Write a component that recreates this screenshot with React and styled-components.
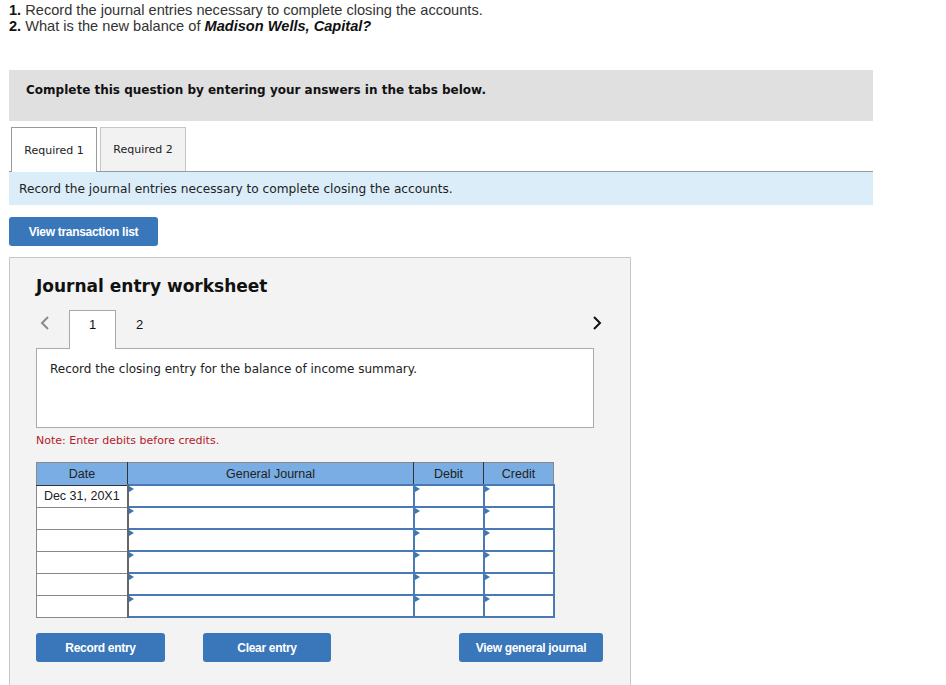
import React from 'react';
import styled, { createGlobalStyle } from 'styled-components';

const GlobalStyle = createGlobalStyle`
  body {
    margin: 0;
    background: #ffffff;
    font-family: 'Liberation Sans', Arial, sans-serif;
    color: #222;
  }
`;

const Page = styled.div`
  width: 946px;
  padding: 2px 0 0 9px;
  box-sizing: border-box;
`;

const Questions = styled.div`
  font-family: 'Liberation Sans', Arial, sans-serif;
  font-size: 14.6px;
  line-height: 16px;
  color: #333;
`;

const QLine = styled.div`
  b { color: #111; }
  em {
    font-weight: bold;
    font-style: italic;
    color: #111;
  }
`;

const Banner = styled.div`
  margin-top: 36px;
  width: 864px;
  height: 51px;
  background: #e0e0e0;
  padding: 13px 0 0 17px;
  box-sizing: border-box;
  font-family: 'DejaVu Sans', Verdana, sans-serif;
  font-weight: bold;
  font-size: 12px;
  line-height: 14px;
  color: #111;
`;

const TabBar = styled.div`
  margin-top: 6px;
  width: 864px;
  display: flex;
  gap: 3px;
  padding-left: 2px;
  box-sizing: border-box;
  border-bottom: 1px solid #999;
`;

const Tab = styled.div`
  width: 86px;
  box-sizing: border-box;
  display: flex;
  align-items: center;
  justify-content: center;
  border: 1px solid ${p => (p.$active ? '#999' : '#c6c6c6')};
  border-bottom: none;
  background: ${p => (p.$active ? '#ffffff' : '#f2f2f2')};
  margin-bottom: ${p => (p.$active ? '-1px' : '0')};
  height: ${p => (p.$active ? '45px' : '44px')};
  font-family: 'DejaVu Sans', Verdana, sans-serif;
  font-size: 11px;
  color: #222;
`;

const Instruction = styled.div`
  width: 864px;
  height: 33px;
  background: #daedf9;
  display: flex;
  align-items: center;
  padding-left: 10px;
  box-sizing: border-box;
  font-family: 'DejaVu Sans', Verdana, sans-serif;
  font-size: 12.2px;
  color: #222;
`;

const Button = styled.button`
  width: ${p => p.$w}px;
  height: 29px;
  border: none;
  border-radius: 3px;
  background: #3a76ba;
  color: #fff;
  font-family: 'Liberation Sans', Arial, sans-serif;
  font-weight: bold;
  font-size: 12px;
  letter-spacing: -0.3px;
  padding: 0;
  cursor: pointer;
`;

const TopButton = styled(Button)`
  margin-top: 12px;
  display: block;
`;

const Worksheet = styled.div`
  margin-top: 11px;
  width: 622px;
  height: 440px;
  box-sizing: border-box;
  background: #f3f3f3;
  border: 1px solid #c8c8c8;
  padding: 18px 0 0 26px;
`;

const Title = styled.h2`
  margin: 0;
  font-family: 'DejaVu Sans', Verdana, sans-serif;
  font-weight: bold;
  font-size: 17px;
  line-height: 20px;
  color: #111;
`;

const NavRow = styled.div`
  margin-top: 13px;
  width: 566px;
  display: flex;
  align-items: flex-end;
  position: relative;
  z-index: 1;
`;

const Arrow = styled.div`
  width: 33px;
  height: 39px;
  box-sizing: border-box;
  padding: 7px 0 0 ${p => (p.$right ? '0' : '4px')};
  display: flex;
  align-items: flex-start;
  justify-content: ${p => (p.$right ? 'flex-end' : 'flex-start')};
  margin-left: ${p => (p.$right ? 'auto' : '0')};
`;

const EntryTab = styled.div`
  width: 47px;
  height: ${p => (p.$active ? '39px' : '38px')};
  margin-bottom: ${p => (p.$active ? '-1px' : '0')};
  box-sizing: border-box;
  padding-top: 6px;
  text-align: center;
  background: ${p => (p.$active ? '#ffffff' : 'transparent')};
  border: ${p => (p.$active ? '1px solid #a8a8a8' : '1px solid transparent')};
  border-bottom: none;
  font-family: 'Liberation Sans', Arial, sans-serif;
  font-size: 13px;
  line-height: 15px;
  color: #111;
`;

const Description = styled.div`
  width: 558px;
  height: 80px;
  box-sizing: border-box;
  background: #fff;
  border: 1px solid #aaa;
  padding: 12px 13px;
  font-family: 'DejaVu Sans', Verdana, sans-serif;
  font-size: 12px;
  line-height: 16px;
  color: #222;
`;

const Note = styled.div`
  margin-top: 6px;
  font-family: 'DejaVu Sans', Verdana, sans-serif;
  font-size: 11px;
  line-height: 14px;
  color: #b3202a;
`;

const Table = styled.table`
  margin-top: 14px;
  border-collapse: collapse;
  width: 517px;
  table-layout: fixed;
  font-family: 'Liberation Sans', Arial, sans-serif;
  font-size: 12.5px;
`;

const Th = styled.th`
  height: 21px;
  padding: 0;
  background: #79ade3;
  font-weight: normal;
  color: #222;
  border: 1px solid #333;
  border-top: 1px solid #888;
  &:first-child { border-left: 1px solid #888; }
  &:last-child { border-right: 1px solid #888; }
`;

const DateCell = styled.td`
  height: 20px;
  padding: 0;
  text-align: center;
  background: #fff;
  color: #222;
  border: 1px solid #888;
  border-right: 2px solid #666;
`;

const InputCell = styled.td`
  height: 20px;
  padding: 0;
  background: #fff;
  border: 2px solid #4a7ab5;
  position: relative;
  &::before {
    content: '';
    position: absolute;
    left: 0;
    top: 0;
    border-left: 5px solid #3a76ba;
    border-top: 3px solid transparent;
    border-bottom: 3px solid transparent;
  }
`;

const ActionRow = styled.div`
  margin-top: 15px;
  width: 567px;
  display: flex;
  gap: 38px;
`;

const Spacer = styled.div`
  flex: 1;
`;

const Chevron = ({ color, dir }) => (
  <svg width="10" height="14" viewBox="0 0 10 14">
    <path
      d={dir === 'left' ? 'M8 1 L2 7 L8 13' : 'M2 1 L8 7 L2 13'}
      fill="none"
      stroke={color}
      strokeWidth="2"
    />
  </svg>
);

const rows = ['Dec 31, 20X1', '', '', '', '', ''];

const App = () => (
  <Page>
    <GlobalStyle />
    <Questions>
      <QLine><b>1.</b> Record the journal entries necessary to complete closing the accounts.</QLine>
      <QLine><b>2.</b> What is the new balance of <em>Madison Wells, Capital?</em></QLine>
    </Questions>

    <Banner>Complete this question by entering your answers in the tabs below.</Banner>

    <TabBar>
      <Tab $active>Required 1</Tab>
      <Tab>Required 2</Tab>
    </TabBar>
    <Instruction>Record the journal entries necessary to complete closing the accounts.</Instruction>

    <TopButton $w={149}>View transaction list</TopButton>

    <Worksheet>
      <Title>Journal entry worksheet</Title>
      <NavRow>
        <Arrow><Chevron color="#8a8a8a" dir="left" /></Arrow>
        <EntryTab $active>1</EntryTab>
        <EntryTab>2</EntryTab>
        <Arrow $right><Chevron color="#111" dir="right" /></Arrow>
      </NavRow>
      <Description>Record the closing entry for the balance of income summary.</Description>
      <Note>Note: Enter debits before credits.</Note>

      <Table>
        <colgroup>
          <col style={{ width: 91 }} />
          <col style={{ width: 286 }} />
          <col style={{ width: 70 }} />
          <col style={{ width: 70 }} />
        </colgroup>
        <thead>
          <tr>
            <Th>Date</Th>
            <Th>General Journal</Th>
            <Th>Debit</Th>
            <Th>Credit</Th>
          </tr>
        </thead>
        <tbody>
          {rows.map((d, i) => (
            <tr key={i}>
              <DateCell>{d}</DateCell>
              <InputCell />
              <InputCell />
              <InputCell />
            </tr>
          ))}
        </tbody>
      </Table>

      <ActionRow>
        <Button $w={129}>Record entry</Button>
        <Button $w={128}>Clear entry</Button>
        <Spacer />
        <Button $w={144}>View general journal</Button>
      </ActionRow>
    </Worksheet>
  </Page>
);

export default App;
